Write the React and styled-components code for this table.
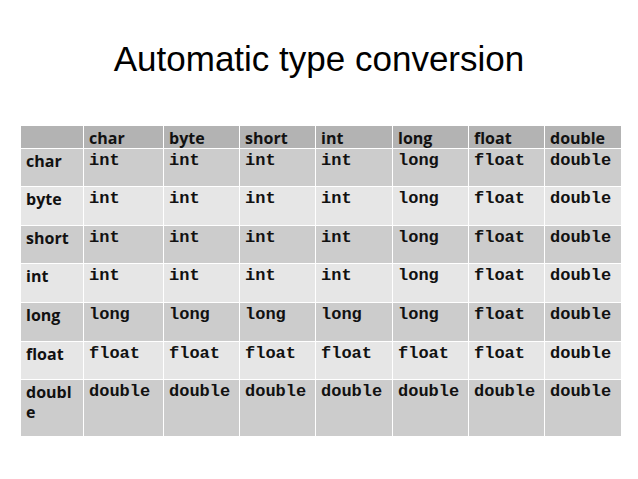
import React from "react";
import styled, { createGlobalStyle } from "styled-components";

const Global = createGlobalStyle`
  html, body { margin: 0; padding: 0; background: #ffffff; }
  body { font-family: "Liberation Sans", Arial, sans-serif; }
`;

const Page = styled.div`
  width: 638px;
  height: 479px;
  padding-top: 39px;
  box-sizing: border-box;
  background: #ffffff;
`;

const Title = styled.h1`
  margin: 0;
  font-family: "Liberation Sans", Arial, sans-serif;
  font-weight: normal;
  font-size: 35px;
  line-height: normal;
  color: #000000;
  text-align: center;
  padding-left: 0;
`;

const Table = styled.div`
  display: grid;
  grid-template-columns: 63px 80px 76px 76px 77px 76px 76px 76px;
  grid-template-rows: 23px 38px 39px 38px 39px 39px 38px 56px;
  margin: 47px 0 0 21px;
  width: 600px;
`;

const tones = {
  head: "#b3b3b3",
  dark: "#cccccc",
  light: "#e6e6e6",
};

const Cell = styled.div`
  box-sizing: border-box;
  background: ${(p) => tones[p.$tone]};
  border-right: ${(p) => (p.$lastCol ? "none" : "1px solid #ffffff")};
  border-bottom: ${(p) => (p.$lastRow ? "none" : "1px solid #ffffff")};
  padding: 2px 4px 0 5px;
  color: #111111;
  line-height: 20px;
  overflow-wrap: anywhere;
  word-break: break-all;
  font-family: ${(p) =>
    p.$mono
      ? '"Liberation Mono", "Courier New", monospace'
      : '"Open Sans", "Noto Sans", sans-serif'};
  font-weight: bold;
  font-size: ${(p) => (p.$mono ? "17px" : "16px")};
`;

const types = ["char", "byte", "short", "int", "long", "float", "double"];
const rank = { char: 0, byte: 0, short: 0, int: 0, long: 1, float: 2, double: 3 };
const rankName = ["int", "long", "float", "double"];
const convert = (a, b) => rankName[Math.max(rank[a], rank[b])];

export default function App() {
  const lastRowIdx = types.length - 1;
  return (
    <>
      <Global />
      <Page>
        <Title>Automatic type conversion</Title>
        <Table>
          <Cell $tone="head" />
          {types.map((t, i) => (
            <Cell key={"h" + t} $tone="head" $lastCol={i === types.length - 1}>
              {t}
            </Cell>
          ))}
          {types.map((row, r) => {
            const tone = r % 2 === 0 ? "dark" : "light";
            const last = r === lastRowIdx;
            return (
              <React.Fragment key={row}>
                <Cell $tone={tone} $lastRow={last}>
                  {row}
                </Cell>
                {types.map((col, c) => (
                  <Cell
                    key={row + col}
                    $tone={tone}
                    $mono
                    $lastRow={last}
                    $lastCol={c === types.length - 1}
                  >
                    {convert(row, col)}
                  </Cell>
                ))}
              </React.Fragment>
            );
          })}
        </Table>
      </Page>
    </>
  );
}
